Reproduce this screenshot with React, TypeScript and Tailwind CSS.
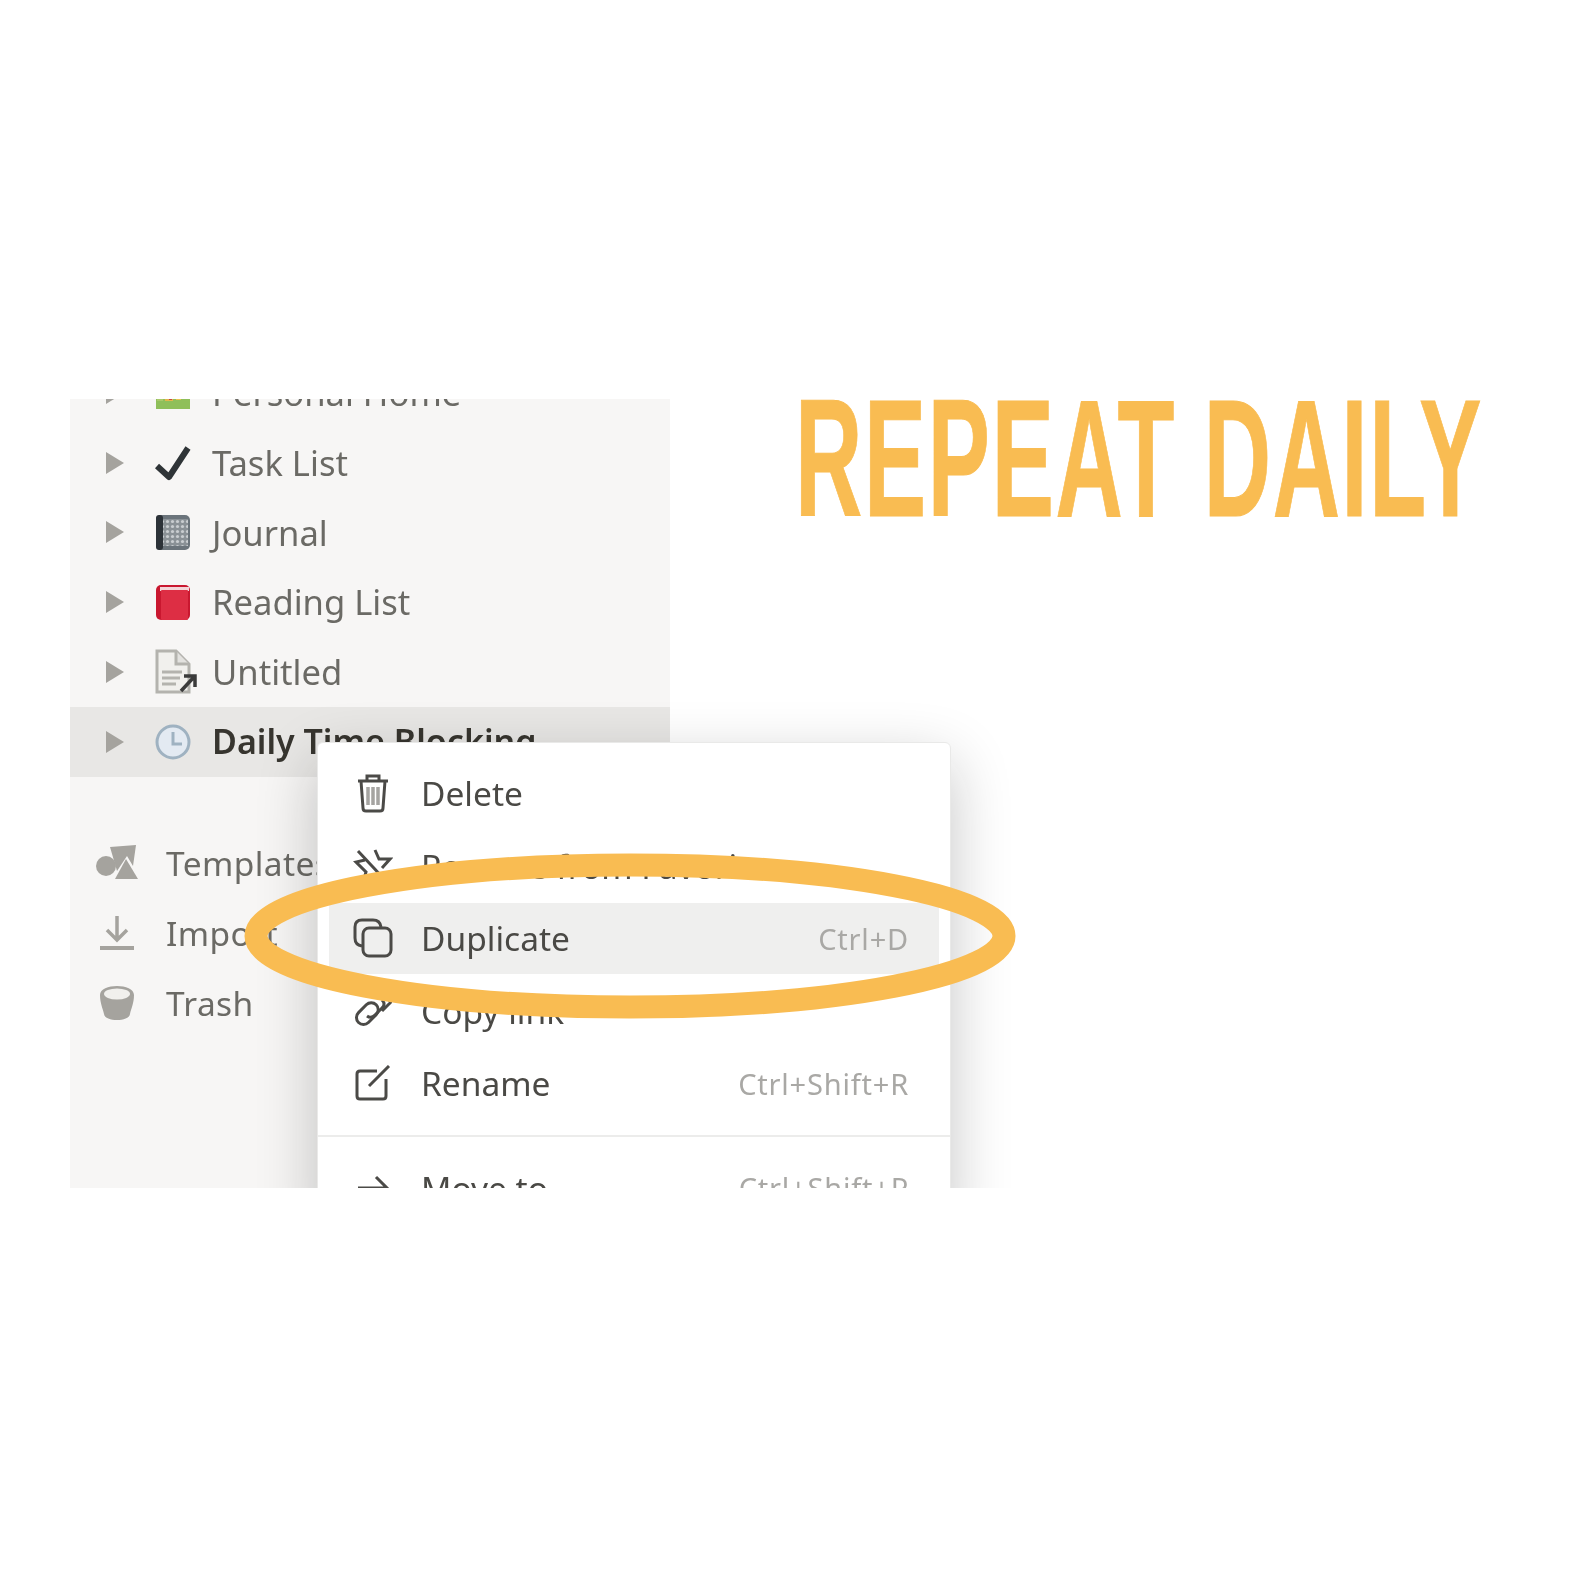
import type { ReactNode } from 'react';

const font = { fontFamily: '"Noto Sans", sans-serif' };

function Arrow() {
    return (
        <svg width="20" height="24" viewBox="0 0 20 24" className="shrink-0">
            <path d="M1 1 L19 12 L1 23 Z" fill="#a5a39e" />
        </svg>
    );
}

function HomeIcon() {
    return (
        <svg width="36" height="36" viewBox="0 0 36 36">
            <rect x="2" y="6" width="32" height="20" fill="#f7f6f5" />
            <rect x="1" y="24" width="34" height="10" fill="#8fbf5a" />
            <rect x="2" y="17" width="6" height="9" fill="#a9c96a" />
            <rect x="10" y="16" width="8" height="10" fill="#e2b64a" />
            <rect x="14" y="18" width="3" height="7" fill="#c9473f" />
            <rect x="21" y="18" width="5" height="7" fill="#e8c44d" />
            <circle cx="31" cy="21" r="3" fill="#5b8fd1" />
        </svg>
    );
}

function CheckIcon() {
    return (
        <svg width="36" height="36" viewBox="0 0 36 36" fill="none">
            <path d="M2 21 L14 32 L33 3" stroke="#2f3437" strokeWidth="6" strokeLinejoin="round" />
        </svg>
    );
}

function JournalIcon() {
    return (
        <svg width="36" height="36" viewBox="0 0 36 36">
            <defs>
                <pattern id="dots" width="5" height="5" patternUnits="userSpaceOnUse">
                    <rect width="5" height="5" fill="#8a9196" />
                    <circle cx="2.5" cy="2.5" r="1.6" fill="#c9cdd0" />
                </pattern>
            </defs>
            <rect x="1" y="1" width="34" height="35" rx="5" fill="#6b747b" />
            <rect x="1" y="1" width="7" height="35" rx="3" fill="#2c3238" />
            <rect x="8" y="5" width="25" height="27" fill="url(#dots)" />
        </svg>
    );
}

function BookIcon() {
    return (
        <svg width="36" height="36" viewBox="0 0 36 36">
            <rect x="1" y="1" width="34" height="35" rx="5" fill="#c9172f" />
            <rect x="5" y="3" width="29" height="4" fill="#f3d5d8" />
            <rect x="6" y="6" width="27" height="30" rx="1" fill="#dd2e44" />
        </svg>
    );
}

function DocIcon() {
    return (
        <svg width="42" height="46" viewBox="0 0 42 46" fill="none">
            <path d="M2 2 H21 L34 15 V43 H2 Z" fill="#f1f0ed" stroke="#b4b3ae" strokeWidth="3" />
            <path d="M21 2 V15 H34" fill="#e3e2df" stroke="#b4b3ae" strokeWidth="3" />
            <path d="M7 23 H27 M7 29 H25 M7 35 H21" stroke="#b4b3ae" strokeWidth="3" />
            <path d="M26 42 L39 28 M29 27 H40 V38" stroke="#3b3b3b" strokeWidth="3.5" />
        </svg>
    );
}

function ClockIcon() {
    return (
        <svg width="36" height="36" viewBox="0 0 36 36" fill="none">
            <circle cx="18" cy="18" r="16" fill="#e3eaf2" stroke="#9fb2c1" strokeWidth="3" />
            <path d="M18 8 V20 H27" stroke="#9fb2c1" strokeWidth="3" />
        </svg>
    );
}

function TemplatesIcon() {
    return (
        <svg width="44" height="38" viewBox="0 0 44 38">
            <circle cx="11" cy="22" r="10" fill="#a5a39e" />
            <path d="M15 3 L41 1 L38 22 L32 12 L22 27 Z" fill="#a5a39e" />
            <path d="M31 15 L43 35 H20 Z" fill="#a5a39e" />
        </svg>
    );
}

function ImportIcon() {
    return (
        <svg width="36" height="36" viewBox="0 0 36 36" fill="none">
            <path d="M18 1 V25 M8 15 L18 25 L28 15" stroke="#a5a39e" strokeWidth="3.5" />
            <path d="M1 33 H35" stroke="#a5a39e" strokeWidth="4" />
        </svg>
    );
}

function TrashFilledIcon() {
    return (
        <svg width="36" height="36" viewBox="0 0 36 36">
            <path d="M1 10 C1 -2 35 -2 35 10 C35 18 32 24 31 29 C30 37 6 37 5 29 C4 24 1 18 1 10 Z" fill="#a5a39e" />
            <ellipse cx="18" cy="9" rx="13" ry="5.5" fill="#f1f0ed" />
        </svg>
    );
}

const menuStroke = {
    fill: 'none',
    stroke: '#4b4a47',
    strokeWidth: 3,
};

function MenuTrash() {
    return (
        <svg width="36" height="40" viewBox="0 0 36 40" {...menuStroke}>
            <path d="M3 8 H33 M12 8 V3 H24 V8 M6 8 L8 35 Q8 38 11 38 H25 Q28 38 28 35 L30 8" />
            <path d="M13 14 V32 M18 14 V32 M23 14 V32" stroke="#a5a4a1" strokeWidth="3.5" />
        </svg>
    );
}

function MenuStarOff() {
    return (
        <svg width="40" height="38" viewBox="0 0 40 38" {...menuStroke}>
            <path d="M22 3 L26 12 L37 12 L29 21 M21 31 L10 36 L13 25 L3 15 L12 13" />
            <path d="M5 4 L32 33" />
        </svg>
    );
}

function MenuCopy() {
    return (
        <svg width="40" height="40" viewBox="0 0 40 40" {...menuStroke}>
            <path d="M9 28 Q2 27 2 20 V9 Q2 2 9 2 H20 Q27 2 28 9" />
            <rect x="10" y="10" width="28" height="28" rx="6" />
        </svg>
    );
}

function MenuLink() {
    return (
        <svg width="38" height="38" viewBox="0 0 38 38" {...menuStroke}>
            <rect x="1" y="15" width="25" height="14" rx="7" transform="rotate(-45 13 22)" />
            <path d="M13 24 Q17 27 21 23 L28 16 Q32 12 28 8 M30 3 L37 10 L28 19" />
        </svg>
    );
}

function MenuRename() {
    return (
        <svg width="36" height="36" viewBox="0 0 36 36" {...menuStroke}>
            <path d="M22 6 H5 Q2 6 2 9 V31 Q2 34 5 34 H28 Q31 34 31 31 V14" />
            <path d="M14 21 L34 1" />
        </svg>
    );
}

function MenuArrow() {
    return (
        <svg width="36" height="36" viewBox="0 0 36 36" {...menuStroke}>
            <path d="M3 18 H32 M21 7 L32 18 L21 29" />
        </svg>
    );
}

const pages: { label: string; icon: ReactNode; active?: boolean }[] = [
    { label: 'Personal Home', icon: <HomeIcon /> },
    { label: 'Task List', icon: <CheckIcon /> },
    { label: 'Journal', icon: <JournalIcon /> },
    { label: 'Reading List', icon: <BookIcon /> },
    { label: 'Untitled', icon: <DocIcon /> },
    { label: 'Daily Time Blocking', icon: <ClockIcon />, active: true },
];

const tools = [
    { label: 'Templates', icon: <TemplatesIcon /> },
    { label: 'Import', icon: <ImportIcon /> },
    { label: 'Trash', icon: <TrashFilledIcon /> },
];

const actions: { label: string; icon: ReactNode; hint?: string; active?: boolean }[] = [
    { label: 'Delete', icon: <MenuTrash /> },
    { label: 'Remove from Favorites', icon: <MenuStarOff /> },
    { label: 'Duplicate', icon: <MenuCopy />, hint: 'Ctrl+D', active: true },
    { label: 'Copy link', icon: <MenuLink /> },
    { label: 'Rename', icon: <MenuRename />, hint: 'Ctrl+Shift+R' },
];

function MenuRow({ label, icon, hint, active }: { label: string; icon: ReactNode; hint?: string; active?: boolean }) {
    return (
        <div className={`mx-[11px] flex h-[70.5px] items-center pr-[30px] ${active ? 'bg-[#efefee]' : ''}`}>
            <div className="mr-[4px] flex w-[88px] shrink-0 justify-center">{icon}</div>
            <span className="text-[33.5px] text-[#4a4945]">{label}</span>
            {hint && <span className="ml-auto text-[29px] tracking-[0.8px] text-[#a9a8a5]">{hint}</span>}
        </div>
    );
}

export default function App() {
    return (
        <div className="relative h-[1588px] w-[1588px] overflow-hidden bg-white" style={font}>
            <div className="flex pl-[70px] pt-[399px]">
                <aside className="h-[789px] w-[600px] shrink-0 overflow-hidden bg-[#f7f6f5] blur-[0.7px]">
                    <div className="-mt-[41px]">
                        {pages.map((page) => (
                            <div
                                key={page.label}
                                className={`flex h-[69.8px] items-center pl-[35px] ${page.active ? 'bg-[#e8e7e5]' : ''}`}
                            >
                                <Arrow />
                                <div className="ml-[30px] flex w-[42px] shrink-0 justify-start">{page.icon}</div>
                                <span
                                    className={`ml-[15px] whitespace-nowrap ${page.active ? 'text-[34px] font-semibold text-[#37352f]' : 'text-[34.6px] text-[#6b6a65]'}`}
                                >
                                    {page.label}
                                </span>
                            </div>
                        ))}
                    </div>
                    <div className="mt-[51px]">
                        {tools.map((tool) => (
                            <div key={tool.label} className="flex h-[70px] items-center">
                                <div className="flex w-[94px] shrink-0 justify-center">{tool.icon}</div>
                                <span className="ml-[2px] text-[33.5px] tracking-[0.4px] text-[#6b6a65]">{tool.label}</span>
                            </div>
                        ))}
                    </div>
                </aside>
                <h1
                    className="ml-[125px] origin-left scale-x-[0.558] whitespace-nowrap text-[167px] font-bold leading-[119px] tracking-[3px] text-[#f9bc52] [-webkit-text-stroke:1px_#f9bc52]"
                    style={{ fontFamily: '"Liberation Sans", sans-serif' }}
                >
                    REPEAT DAILY
                </h1>
            </div>

            {/* clip box so the popup and its shadow stop at the bottom of the screenshot */}
            <div className="pointer-events-none absolute left-[70px] top-[399px] h-[789px] w-[1000px] overflow-hidden">
                <div className="absolute left-[247px] top-[343px] w-[634px] rounded-t-[6px] border border-[#e9e9e8] bg-white pt-[15px] shadow-[0_20px_60px_rgba(15,15,15,0.24)] blur-[0.7px]">
                    <div className="flex flex-col gap-[2px]">
                        {actions.map((action) => (
                            <MenuRow key={action.label} {...action} />
                        ))}
                    </div>
                    <div className="mt-[16px] border-t-2 border-[#ececeb]" />
                    <div className="pt-[16px]">
                        <MenuRow label="Move to" icon={<MenuArrow />} hint="Ctrl+Shift+P" />
                    </div>
                </div>
            </div>

            {/* highlight ring drawn over the screenshot */}
            <svg className="absolute left-[240px] top-[848px]" width="782" height="176" viewBox="0 0 782 176" fill="none">
                <ellipse cx="390" cy="88" rx="374" ry="71" stroke="#f9bc52" strokeWidth="23" />
            </svg>
        </div>
    );
}
